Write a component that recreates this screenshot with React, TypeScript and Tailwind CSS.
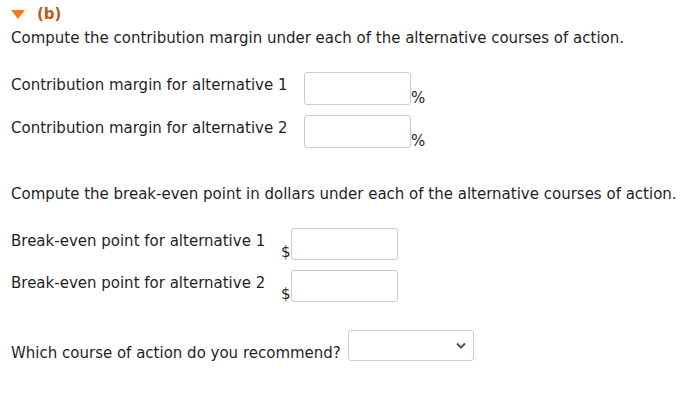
export default function App() {
  return (
    <div className="w-[695px] h-[420px] bg-white text-[15px] leading-[20px] text-[#1f1f1f] pl-[11px] pt-[4px]" style={{ fontFamily: '"DejaVu Sans", Verdana, sans-serif' }}>
      {/* part header */}
      <div className="flex items-center h-[20px]">
        <svg width="14" height="9" viewBox="0 0 14 9" className="mt-[1px]">
          <polygon points="0,0 14,0 7,9" fill="#f47b20" />
        </svg>
        <span className="ml-[12px] font-bold text-[#c4561a]">(b)</span>
      </div>
      <p className="mt-[4px]">Compute the contribution margin under each of the alternative courses of action.</p>

      {/* contribution margin */}
      <div className="mt-[24px] flex flex-col gap-[10px]">
        {[1, 2].map((n) => (
          <div key={n} className="flex">
            <div className="w-[293px] pt-[3px]">Contribution margin for alternative {n}</div>
            <div className="w-[107px] h-[33px] border border-[#ccc] rounded-[3px]" />
            <span className="self-end leading-[16px] mb-[-1px]">%</span>
          </div>
        ))}
      </div>

      <p className="mt-[36px]">Compute the break-even point in dollars under each of the alternative courses of action.</p>

      {/* break-even */}
      <div className="mt-[24px] flex flex-col gap-[10px]">
        {[1, 2].map((n) => (
          <div key={n} className="flex">
            <div className="w-[270px] pt-[3px]">Break-even point for alternative {n}</div>
            <span className="self-end leading-[16px] w-[10px]">$</span>
            <div className="w-[107px] h-[32px] border border-[#ccc] rounded-[3px]" />
          </div>
        ))}
      </div>

      {/* recommendation */}
      <div className="mt-[28px] flex items-end">
        <span className="leading-[20px] mb-[-2px]">Which course of action do you recommend?</span>
        <div className="ml-[7px] w-[126px] h-[31px] border border-[#ccc] rounded-[3px] flex items-center justify-end pr-[7px]">
          <svg width="10" height="7" viewBox="0 0 10 7">
            <path d="M1 1.5 L5 5.5 L9 1.5" fill="none" stroke="#555" strokeWidth="2" />
          </svg>
        </div>
      </div>
    </div>
  )
}
